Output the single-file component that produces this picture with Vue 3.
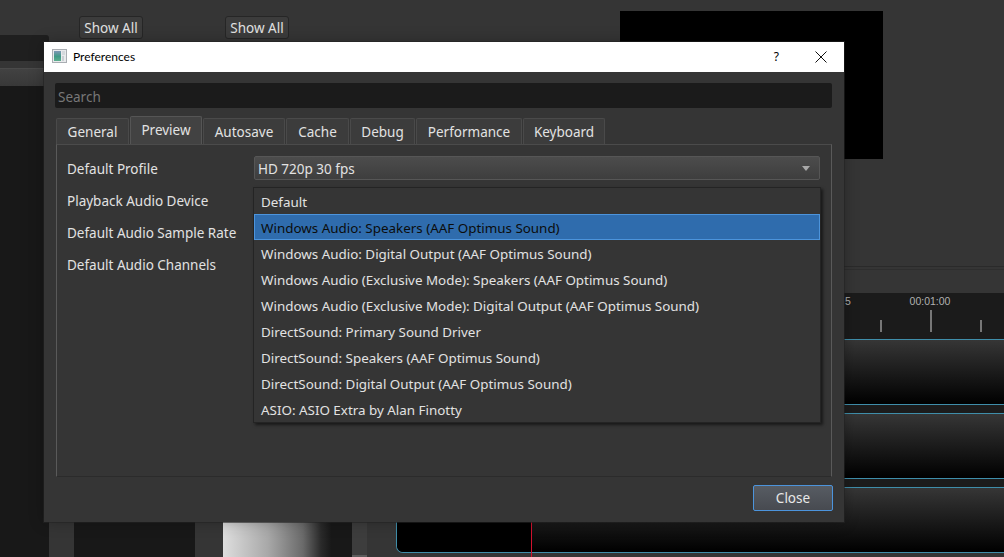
<template>
  <div class="app">
    <div class="left-col">
      <div class="col col-a">
        <div class="search-box"></div>
        <div class="col-header"></div>
        <div class="list"></div>
      </div>
      <div class="col col-b">
        <button class="show-all">Show All</button>
        <div class="list"></div>
      </div>
      <div class="col col-c">
        <button class="show-all">Show All</button>
        <div class="thumb"></div>
      </div>
      <div class="scrollbar"><div class="scroll-end"></div></div>
    </div>

    <div class="right-col">
      <div class="preview-area">
        <div class="preview"></div>
      </div>
      <div class="timeline-bar"></div>
      <div class="ruler">
        <span class="ruler-label" :style="{ left: '481px' }">5</span>
        <span class="ruler-label" :style="{ left: '563px' }">00:01:00</span>
        <i
          v-for="t in ticks"
          :key="t.x"
          class="tick"
          :class="{ major: t.major }"
          :style="{ left: t.x + 'px' }"
        ></i>
      </div>
      <div class="tracks">
        <div v-for="n in 3" :key="n" class="track">
          <div v-if="n === 3" class="clip"></div>
        </div>
        <div class="playhead"></div>
      </div>
    </div>

    <!-- Preferences window -->
    <div class="dialog">
      <div class="titlebar">
        <svg class="app-icon" width="15" height="14" viewBox="0 0 15 14">
          <rect x="0.5" y="0.5" width="14" height="13" fill="#e8eaec" stroke="#a9adb2" />
          <rect x="2" y="2" width="7" height="10" fill="url(#iconFill)" />
          <rect x="10" y="2" width="3" height="4" fill="#d4d8dc" />
          <rect x="10" y="7" width="2" height="5" fill="#c9ced2" />
          <defs>
            <linearGradient id="iconFill" x1="0" y1="0" x2="0" y2="1">
              <stop offset="0" stop-color="#7d96b4" />
              <stop offset="0.55" stop-color="#3f9a86" />
              <stop offset="1" stop-color="#5dae8e" />
            </linearGradient>
          </defs>
        </svg>
        <span class="title">Preferences</span>
        <span class="help">?</span>
        <svg class="close-x" width="12" height="12" viewBox="0 0 12 12">
          <path d="M0.5 0.5L11.5 11.5M11.5 0.5L0.5 11.5" stroke="#111" stroke-width="1" fill="none" />
        </svg>
      </div>

      <div class="dialog-body">
        <div class="search">Search</div>

        <div class="tabs">
          <div
            v-for="tab in tabs"
            :key="tab.name"
            class="tab"
            :class="{ active: tab.name === 'Preview' }"
            :style="{ width: tab.width + 'px' }"
          >
            {{ tab.name }}
          </div>
        </div>

        <div class="pane">
          <div class="row">
            <label>Default Profile</label>
            <div class="combo">
              <span>HD 720p 30 fps</span>
              <i class="arrow"></i>
            </div>
          </div>
          <div class="row"><label>Playback Audio Device</label></div>
          <div class="row"><label>Default Audio Sample Rate</label></div>
          <div class="row"><label>Default Audio Channels</label></div>

          <div class="popup">
            <div
              v-for="(item, i) in devices"
              :key="item"
              class="item"
              :class="{ selected: i === 1 }"
            >
              {{ item }}
            </div>
          </div>
        </div>

        <div class="footer">
          <button class="close-btn">Close</button>
        </div>
      </div>
    </div>
  </div>
</template>

<script setup>
const tabs = [
  { name: 'General', width: 73 },
  { name: 'Preview', width: 72 },
  { name: 'Autosave', width: 82 },
  { name: 'Cache', width: 63 },
  { name: 'Debug', width: 65 },
  { name: 'Performance', width: 106 },
  { name: 'Keyboard', width: 82 }
]

const devices = [
  'Default',
  'Windows Audio: Speakers (AAF Optimus Sound)',
  'Windows Audio: Digital Output (AAF Optimus Sound)',
  'Windows Audio (Exclusive Mode): Speakers (AAF Optimus Sound)',
  'Windows Audio (Exclusive Mode): Digital Output (AAF Optimus Sound)',
  'DirectSound: Primary Sound Driver',
  'DirectSound: Speakers (AAF Optimus Sound)',
  'DirectSound: Digital Output (AAF Optimus Sound)',
  'ASIO: ASIO Extra by Alan Finotty'
]

const ticks = [
  { x: 513, major: false },
  { x: 563, major: true },
  { x: 613, major: false }
]
</script>

<style>
html,
body {
  margin: 0;
  background: #353535;
}
</style>

<style scoped>
.app {
  position: relative;
  width: 1004px;
  height: 557px;
  overflow: hidden;
  display: flex;
  background: #353535;
  font-family: "Noto Sans", sans-serif;
  font-size: 13.5px;
  color: #e2e2e2;
}

.left-col {
  width: 367px;
  flex: none;
  display: flex;
}

.col {
  flex: none;
  display: flex;
  flex-direction: column;
}

.col-a {
  width: 49px;
  margin-right: 25px;
  padding-top: 35px;
}

.col-b {
  width: 121px;
  margin-right: 28px;
  padding-top: 16px;
}

.col-c {
  width: 129px;
  padding-top: 16px;
}

.search-box {
  height: 26px;
  background: #1f1f1f;
  border-radius: 0 3px 3px 0;
  margin-bottom: 7px;
}

.col-header {
  height: 18px;
  background: linear-gradient(#424242, #383838);
  border-top: 1px solid #4a4a4a;
  box-sizing: border-box;
}

.list {
  flex: 1;
  background: #181818;
}

.col-b .list {
  margin-top: 20px;
}

.show-all {
  align-self: flex-start;
  width: 64px;
  height: 23px;
  padding: 0;
  box-sizing: border-box;
  border: 1px solid #262626;
  border-radius: 3px;
  background: #3c3c3c;
  color: #e2e2e2;
  font: inherit;
}

.col-b .show-all {
  margin-left: 5px;
}

.col-c .show-all {
  margin-left: 2px;
}

.thumb {
  flex: 1;
  margin-top: 20px;
  background: linear-gradient(90deg, #dedede 0, #a8a8a8 35%, #6a6a6a 62%, #2a2a2a 76%, #181818 84%);
}

.scrollbar {
  width: 15px;
  flex: none;
  margin-top: 60px;
  background: #3d3d3d;
  display: flex;
  align-items: flex-end;
}

.scroll-end {
  width: 100%;
  height: 2px;
  background: #5c5c5c;
}

.right-col {
  flex: 1;
  min-width: 0;
  display: flex;
  flex-direction: column;
}

.preview-area {
  height: 267px;
  padding: 11px 0 0 253px;
  box-sizing: border-box;
  border-bottom: 1px solid #2a2a2a;
}

.preview {
  width: 263px;
  height: 148px;
  background: #000;
}

.timeline-bar {
  height: 24px;
  border-top: 1px solid #2e2e2e;
  margin-top: 2px;
  box-sizing: border-box;
}

.ruler {
  position: relative;
  height: 46px;
  background: #1b1b1b;
}

.ruler-label {
  position: absolute;
  top: 2px;
  transform: translateX(-50%);
  font-family: "Liberation Sans", sans-serif;
  font-size: 10.5px;
  line-height: 12px;
  color: #b0b0b0;
}

.tick {
  position: absolute;
  bottom: 7px;
  width: 2px;
  height: 12px;
  background: #777;
}

.tick.major {
  height: 22px;
}

.tracks {
  position: relative;
  margin-left: 29px;
  background: linear-gradient(#1c1c1c, #1c1c1c) no-repeat 0 0 / 100% 148px;
}

.track {
  position: relative;
  height: 66px;
  margin-bottom: 8px;
  box-sizing: border-box;
  border-top: 1px solid #3f8eaa;
  border-bottom: 1px solid #3f8eaa;
  background: linear-gradient(#363636, #000);
}

.track:nth-child(3) {
  margin-bottom: 0;
  border-left: 1px solid #3f8eaa;
  border-radius: 0 0 0 7px;
}

.clip {
  width: 134px;
  height: 100%;
  background: #000;
  border-radius: 0 0 0 6px;
}

.playhead {
  position: absolute;
  left: 135px;
  top: 160px;
  bottom: -20px;
  width: 1px;
  background: #d2122e;
}

/* dialog */
.dialog {
  position: absolute;
  left: 44px;
  top: 42px;
  width: 800px;
  height: 480px;
  display: flex;
  flex-direction: column;
  background: #353535;
  box-shadow: 0 0 14px rgba(0, 0, 0, 0.28), 0 0 0 1px rgba(40, 40, 40, 0.6);
}

.titlebar {
  height: 30px;
  flex: none;
  display: flex;
  align-items: center;
  background: #fff;
  color: #000;
  padding: 0 17px 0 8px;
}

.app-icon {
  flex: none;
  margin-bottom: 2px;
}

.title {
  margin-left: 6px;
  margin-bottom: 1px;
  font-family: "Lato", sans-serif;
  font-size: 12px;
  flex: 1;
}

.help {
  font-size: 12px;
  margin-right: 36px;
  margin-bottom: 1px;
}

.close-x {
  flex: none;
  margin-bottom: 1px;
}

.dialog-body {
  flex: 1;
  display: flex;
  flex-direction: column;
  padding: 11px 12px 11px 11px;
  min-height: 0;
}

.search {
  height: 25px;
  flex: none;
  box-sizing: border-box;
  padding-left: 3px;
  line-height: 28px;
  background: #1b1b1b;
  border-radius: 2px;
  color: #777;
}

.tabs {
  display: flex;
  align-items: flex-end;
  height: 36px;
  flex: none;
  padding-left: 1px;
  gap: 1px;
}

.tab {
  height: 26px;
  box-sizing: border-box;
  text-align: center;
  line-height: 27px;
  background: #3c3c3c;
  border: 1px solid #4a4a4a;
  border-bottom: none;
  border-radius: 2px 2px 0 0;
}

.tab.active {
  height: 28px;
  line-height: 26px;
  background: #424242;
  border-color: #555;
}

.pane {
  position: relative;
  height: 333px;
  flex: none;
  margin-left: 1px;
  padding: 8px 0 0 10px;
  box-sizing: border-box;
  border: 1px solid #2b2b2b;
  border-left-color: #5a5a5a;
  border-right-color: #5a5a5a;
  border-top-color: #4b4b4b;
}

.row {
  display: flex;
  align-items: center;
  height: 32px;
}

.row label {
  width: 187px;
  flex: none;
}

.combo {
  flex: none;
  width: 566px;
  height: 24px;
  margin-top: -2px;
  padding: 0 9px 0 3px;
  box-sizing: border-box;
  display: flex;
  align-items: center;
  justify-content: space-between;
  background: linear-gradient(#4c4c4c, #3e3e3e);
  border: 1px solid #565656;
  border-radius: 2px;
}

.combo span {
  padding-top: 2px;
}

.arrow {
  width: 0;
  height: 0;
  border-left: 4px solid transparent;
  border-right: 4px solid transparent;
  border-top: 5px solid #a8a8a8;
}

.popup {
  position: absolute;
  left: 196px;
  top: 42px;
  width: 568px;
  height: 236px;
  box-sizing: border-box;
  background: #353535;
  border: 1px solid #242424;
  box-shadow: 2px 2px 3px rgba(0, 0, 0, 0.55);
  font-size: 13.4px;
}

.item {
  height: 26px;
  box-sizing: border-box;
  padding-left: 7px;
  line-height: 28px;
}

.selected {
  background: #2f6cad;
  border: 1px solid #4c94dc;
  padding-left: 6px;
  line-height: 26px;
  color: #0c0c0c;
}

.footer {
  flex: 1;
  display: flex;
  justify-content: flex-end;
  align-items: flex-start;
  padding-top: 8px;
}

.close-btn {
  width: 80px;
  height: 26px;
  padding: 0;
  margin-right: -1px;
  box-sizing: border-box;
  border: 1px solid #4c94dc;
  border-radius: 2px;
  background: linear-gradient(#575c63, #474a50);
  color: #e8e8e8;
  font: inherit;
}
</style>
